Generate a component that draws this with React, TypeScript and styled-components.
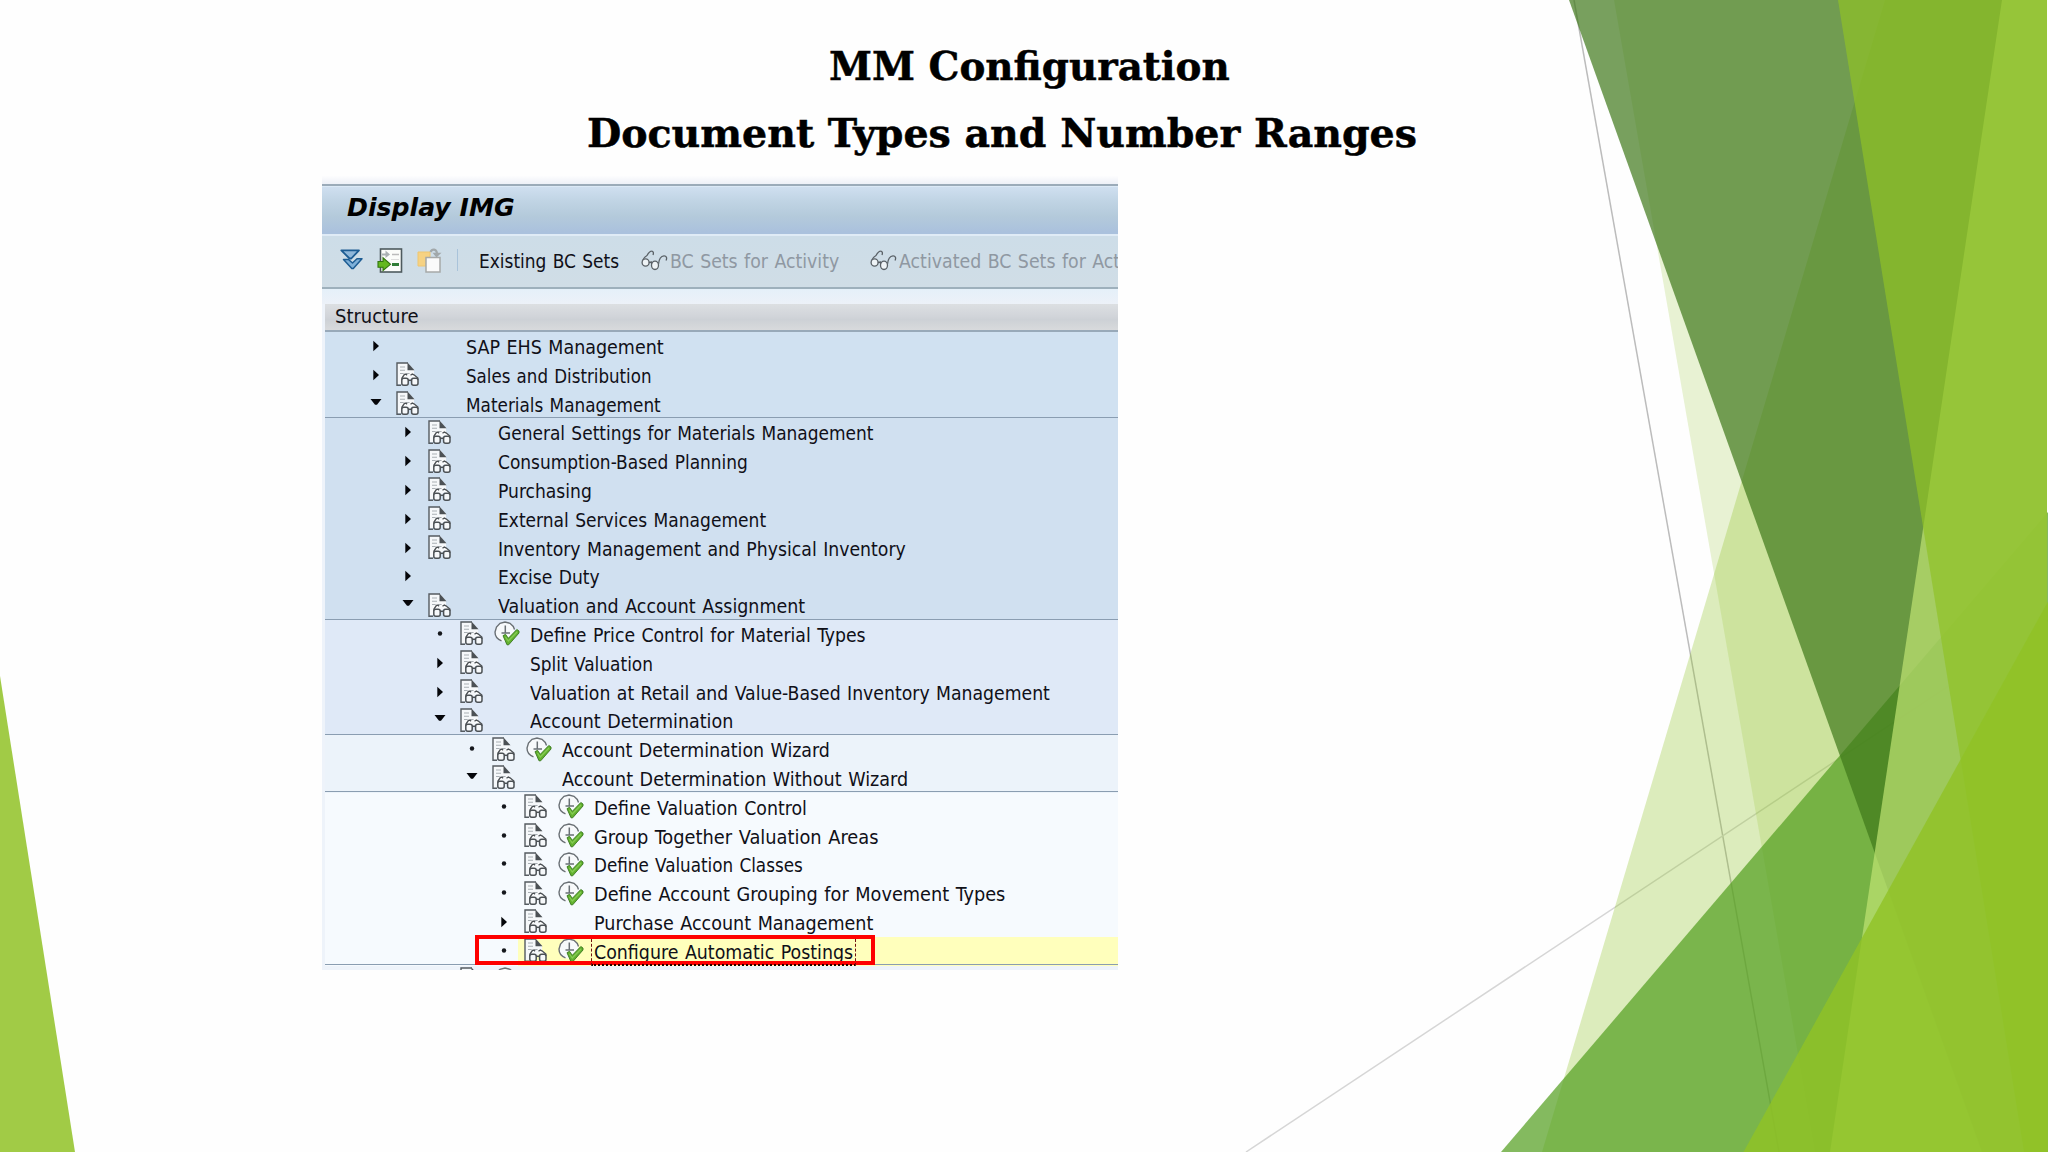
import React, { useLayoutEffect, useRef, useState } from 'react';
import styled, { createGlobalStyle } from 'styled-components';

const GlobalStyle = createGlobalStyle`
  html, body { margin: 0; padding: 0; background: #fff; }
  * { box-sizing: border-box; }
`;

const Slide = styled.main`
  position: relative;
  width: 2048px;
  height: 1152px;
  overflow: hidden;
  background: #fefefe;
`;

const Backdrop = styled.svg`
  position: absolute;
  inset: 0;
`;

const Content = styled.div`
  position: relative;
  display: flex;
  flex-direction: column;
  padding-top: 32px;
`;

const Headings = styled.header`
  height: 144px;
  font-family: 'DejaVu Serif', serif;
  font-weight: 700;
  font-size: 40px;
  line-height: 67px;
  color: #000;
  -webkit-text-stroke: 0.5px #000;
`;

const Heading = styled.h1<{ $indent: number }>`
  margin: 0;
  padding-left: ${(p) => p.$indent}px;
  font: inherit;
  height: 67px;
`;

const FitOuter = styled.span<{ $width: number }>`
  display: inline-block;
  width: ${(p) => p.$width}px;
  flex: none;
  white-space: nowrap;
`;

const FitInner = styled.span`
  display: inline-block;
  transform-origin: 0 50%;
  white-space: nowrap;
`;

/* Sets a run of text to an exact measure by condensing or expanding it. */
function Fit({ width, children }: { width: number; children: string }) {
  const ref = useRef<HTMLSpanElement>(null);
  const [scale, setScale] = useState(1);
  useLayoutEffect(() => {
    if (ref.current) setScale(width / ref.current.offsetWidth);
  }, [width, children]);
  return (
    <FitOuter $width={width}>
      <FitInner ref={ref} style={{ transform: `scaleX(${scale})` }}>
        {children}
      </FitInner>
    </FitOuter>
  );
}

const Window = styled.section`
  width: 796px;
  height: 794px;
  margin-left: 322px;
  overflow: hidden;
  display: flex;
  flex-direction: column;
  background: #eef3fa;
  font-family: 'DejaVu Sans Condensed', 'DejaVu Sans', sans-serif;
  font-stretch: condensed;
  font-size: 20.2px;
  word-spacing: 1px;
  color: #101018;
`;

const TopStrip = styled.div`
  height: 10px;
  flex: none;
  background: linear-gradient(#fdfdfe, #edf0f7);
  border-bottom: 2px solid #9babb9;
`;

const TitleBar = styled.div`
  height: 50px;
  flex: none;
  display: flex;
  align-items: center;
  padding: 0 0 7px 25px;
  background: linear-gradient(#cfdff0 0%, #c0d4e4 30%, #b4cadb 62%, #aac1dd 96%);
  border-top: 1px solid #dbe9f6;
  border-bottom: 2px solid #dfebf6;
  font-size: 25px;
  font-weight: 700;
  font-style: italic;
  word-spacing: 0;
  color: #000;
`;

const Toolbar = styled.div`
  height: 53px;
  flex: none;
  display: flex;
  align-items: center;
  padding: 0 0 3px 18px;
  background: linear-gradient(#cddde8, #d0dde6);
  border-bottom: 2px solid #9eb0bc;
`;

const Tool = styled.span<{ $gap: number }>`
  display: flex;
  flex: none;
  margin-right: ${(p) => p.$gap}px;
`;

const Divider = styled.i`
  width: 1px;
  height: 22px;
  flex: none;
  margin-right: 21px;
  background: #a9c3da;
`;

const ToolLabel = styled.span<{ $muted?: boolean; $gap?: number }>`
  flex: none;
  margin-right: ${(p) => p.$gap ?? 0}px;
  padding-top: 1px;
  color: ${(p) => (p.$muted ? '#8f98a2' : '#101018')};
`;

const Spacer = styled.div`
  height: 15px;
  flex: none;
  background: linear-gradient(#e5f0f9, #ecf1f8);
`;

const ColumnHead = styled.div`
  height: 28px;
  flex: none;
  display: flex;
  align-items: center;
  margin-left: 3px;
  padding: 0 0 2px 10px;
  background: linear-gradient(#dcdfe2, #d2d5da 45%, #cdd1d6 60%, #d8dadc);
  border-bottom: 2px solid #98a9b9;
`;

const Tree = styled.div`
  margin-left: 3px;
  flex: none;
`;

const Band = styled.div<{ $tone: string }>`
  position: relative;
  background: ${(p) => p.$tone};
  &::after {
    content: '';
    position: absolute;
    left: 0;
    right: 0;
    bottom: 0.4px;
    height: 1px;
    z-index: 1;
    background: #8a9db1;
  }
`;

const Row = styled.div<{ $level: number; $picked?: boolean }>`
  position: relative;
  height: 28.8px;
  display: grid;
  grid-template-columns: 26px 34px 36px 1fr;
  align-items: start;
  padding-left: ${(p) => 45 + p.$level * 32}px;
  background: ${(p) =>
    p.$picked ? 'linear-gradient(90deg, transparent 193px, #ffffbc 193px)' : 'none'};
`;

const Cell = styled.span<{ $top: number }>`
  display: flex;
  padding-top: ${(p) => p.$top}px;
`;

const IconCell = styled(Cell)`
  margin-left: -0.5px;
`;

const Label = styled.span`
  line-height: 31px;
`;

const Callout = styled.div`
  position: absolute;
  left: 149.500px;
  top: -2px;
  width: 400px;
  height: 30px;
  border: 4px solid #fe0000;
  z-index: 2;
`;

const Focus = styled.div`
  position: absolute;
  left: 266px;
  top: 2px;
  width: 265px;
  height: 27px;
  border: 1px dashed #701010;
  border-top: 0;
  border-bottom: 2px dotted #200;
  z-index: 3;
`;

const DocIcon = () => (
  <svg width="23" height="24" viewBox="0 0 23 24" fill="none">
    <path d="M1 1H12L18 8V14L8 22H1Z" fill="#f6f8fa" />
    <path d="M5 23.2H1V1H12" stroke="#555b60" strokeWidth="1.4" />
    <path d="M11.5 0.5L18.5 8.2H11.5Z" fill="#4c5155" />
    <path d="M4 5H9M4 8.3H9M4 11.5H14" stroke="#a9afb4" strokeWidth="1.1" />
    <path d="M6 18C6 14 7.500 12.500 10.500 12.200M14 12.500C16 11.500 17.500 13 18 14.500L21.500 17.500" stroke="#fff" strokeWidth="3" />
    <path d="M6 18V16L8.300 12.500L10 12L11 13.300M14.500 13.300L16.300 12L18 12.800L21.800 16V18" stroke="#4c5155" strokeWidth="1.400" />
    <rect x="5.800" y="16.300" width="6.400" height="6.900" rx="2" fill="#f6f8fa" stroke="#4c5155" strokeWidth="1.500" />
    <rect x="15.600" y="16.300" width="6.400" height="6.900" rx="2" fill="#f6f8fa" stroke="#4c5155" strokeWidth="1.500" />
    <path d="M12 18.300H15.600" stroke="#4c5155" strokeWidth="1.500" />
  </svg>
);

const ClockIcon = () => (
  <svg width="26" height="25" viewBox="0 0 26 25" fill="none">
    <circle cx="11" cy="11" r="9.800" fill="#f7f9fb" />
    <path d="M7.500 19.800C4 18.500 1 15.300 1 11L2.500 6L6 2.300L11 1L16 2.300L19.300 5.500L20.500 8.500" stroke="#6a7075" strokeWidth="1.400" />
    <path d="M11.300 4.500V12H16M7.500 12H11" stroke="#6a7075" strokeWidth="1.500" />
    <path d="M9 14.700L11.500 13.300L14.300 17.300L22.800 8.500L25 10V12L14.700 23.800H13Z" fill="#63b22f" stroke="#38761d" strokeWidth="0.900" />
    <path d="M11.500 16L14.300 20L23 11" stroke="#86cc55" strokeWidth="1.200" />
  </svg>
);

type Kind = 'closed' | 'open' | 'leaf';

const Marker = ({ kind }: { kind: Kind }) => (
  <svg width="12" height="12" viewBox="0 0 12 12">
    {kind === 'closed' && <path d="M3.300 0.700L9 6L3.300 11.300Z" fill="#05060a" />}
    {kind === 'open' && <path d="M0.500 1H11.500L7 6.700H5Z" fill="#05060a" />}
    {kind === 'leaf' && <circle cx="6" cy="5.500" r="2.200" fill="#15171c" />}
  </svg>
);

const ExpandIcon = () => (
  <svg width="24" height="22" viewBox="0 0 24 22">
    <path d="M3.500 10.500H8.500L12.500 14L17 9.800H22L13.300 19.500H11.800Z" fill="#7fb0d8" stroke="#1d5c93" strokeWidth="1.500" strokeLinejoin="round" />
    <path d="M1.300 1.300H19L11.300 9.500H9.500Z" fill="#8fb7da" stroke="#1d5c93" strokeWidth="1.800" strokeLinejoin="round" />
  </svg>
);

const ImportIcon = () => (
  <svg width="26" height="25" viewBox="0 0 26 25">
    <rect x="3.500" y="1" width="21" height="23" fill="#fbfcfa" stroke="#4e5a5e" strokeWidth="1.600" />
    <path d="M5 5.500H8.500V2.500L13 6.500L8.500 10V7.500H5Z" fill="#aab0b3" />
    <path d="M15 6.500H22" stroke="#bbb" strokeWidth="1.500" />
    <path d="M15 16.500H22" stroke="#2f7d36" strokeWidth="3" />
    <path d="M14 11.500H22" stroke="#ddd" />
    <path d="M1 13.500H6V9.800L13.500 16.300L6 22.500V19.300H1Z" fill="#64b81f" stroke="#32750f" strokeWidth="1.100" />
  </svg>
);

const CopyIcon = () => (
  <svg width="25" height="25" viewBox="0 0 25 25">
    <path d="M1 4H13V10H9V18H1Z" fill="#f6d283" stroke="#efc670" />
    <rect x="9" y="9.500" width="14" height="14.500" fill="#fafafa" stroke="#a7a9a8" strokeWidth="1.500" />
    <path d="M13.500 4C15 0.500 19.500 0.500 20 5.500" fill="none" stroke="#a2a8aa" strokeWidth="2.200" />
    <path d="M15.500 4.800H24.500L19.500 9.500Z" fill="#a2a8aa" />
  </svg>
);

const GlassesIcon = () => (
  <svg width="27" height="21" viewBox="0 0 27 21" fill="none" stroke="#596066" strokeWidth="1.300">
    <path d="M1.300 11C2.500 8 4 6.500 6 5.500C7.500 3 9 1.200 10.500 1.200C12.300 1 12.800 3 12 5M17.500 14C18 9 20.500 6 23 5.800C25.500 5.700 26.300 8 25 10.500" />
    <ellipse cx="4.600" cy="12.500" rx="3.500" ry="3.700" fill="#eef3f6" />
    <ellipse cx="14" cy="15.300" rx="3.500" ry="4.200" fill="#eef3f6" />
    <path d="M7.800 12.500L10.500 12V14" />
  </svg>
);

type Item = { text: string; width: number; level: number; kind: Kind; doc?: boolean; clock?: boolean; picked?: boolean };

const item = (level: number, kind: Kind, text: string, width: number, flags = 'd'): Item => ({
  level, kind, text, width,
  doc: flags.includes('d'), clock: flags.includes('c'), picked: flags.includes('p'),
});

const bands: { tone: string; items: Item[] }[] = [
  { tone: '#d0e1f1', items: [
    item(0, 'closed', 'SAP EHS Management', 197.5, ''),
    item(0, 'closed', 'Sales and Distribution', 185.5),
    item(0, 'open', 'Materials Management', 195),
  ] },
  { tone: '#d0e0f0', items: [
    item(1, 'closed', 'General Settings for Materials Management', 375.5),
    item(1, 'closed', 'Consumption-Based Planning', 250),
    item(1, 'closed', 'Purchasing', 93.5),
    item(1, 'closed', 'External Services Management', 268),
    item(1, 'closed', 'Inventory Management and Physical Inventory', 407.5),
    item(1, 'closed', 'Excise Duty', 102, ''),
    item(1, 'open', 'Valuation and Account Assignment', 307),
  ] },
  { tone: '#dfe9f7', items: [
    item(2, 'leaf', 'Define Price Control for Material Types', 336, 'dc'),
    item(2, 'closed', 'Split Valuation', 123.5),
    item(2, 'closed', 'Valuation at Retail and Value-Based Inventory Management', 519.5),
    item(2, 'open', 'Account Determination', 203.5),
  ] },
  { tone: '#ecf3fa', items: [
    item(3, 'leaf', 'Account Determination Wizard', 267.5, 'dc'),
    item(3, 'open', 'Account Determination Without Wizard', 346),
  ] },
  { tone: '#f6fafe', items: [
    item(4, 'leaf', 'Define Valuation Control', 213, 'dc'),
    item(4, 'leaf', 'Group Together Valuation Areas', 284.5, 'dc'),
    item(4, 'leaf', 'Define Valuation Classes', 209, 'dc'),
    item(4, 'leaf', 'Define Account Grouping for Movement Types', 411.5, 'dc'),
    item(4, 'closed', 'Purchase Account Management', 279.5),
    item(4, 'leaf', 'Configure Automatic Postings', 259, 'dcp'),
  ] },
];

function TreeRow({ it }: { it: Item }) {
  return (
    <Row $level={it.level} $picked={it.picked}>
      <Cell $top={8}><Marker kind={it.kind} /></Cell>
      <IconCell $top={1.5}>{it.doc && <DocIcon />}</IconCell>
      <IconCell $top={1.5}>{it.clock && <ClockIcon />}</IconCell>
      <Label><Fit width={it.width}>{it.text}</Fit></Label>
      {it.picked && <Focus />}
      {it.picked && <Callout />}
    </Row>
  );
}

const Facets = () => (
  <Backdrop width="2048" height="1152" viewBox="0 0 2048 1152">
    <path d="M1574 0L1779 1152" stroke="#bcbcbc" strokeWidth="1.500" />
    <path d="M1246 1152L2048 620" stroke="#d6d6d6" strokeWidth="1.500" />
    <path d="M1885 0H2047V1152H1542Z" fill="#90c226" fillOpacity="0.3" />
    <path d="M1614 0H2047V1152H1815Z" fill="#90c226" fillOpacity="0.2" />
    <path d="M1501 1152L2048 512V1152Z" fill="#54a021" fillOpacity="0.72" />
    <path d="M1569 0H2047V1152H1982Z" fill="#3f7819" fillOpacity="0.7" />
    <path d="M2002 0H2047V1152H1830Z" fill="#c0e474" fillOpacity="0.7" />
    <path d="M1838 0H2047V1152H2024Z" fill="#90c226" fillOpacity="0.7" />
    <path d="M1743.500 1152L2048 601.500V1152Z" fill="#90c226" fillOpacity="0.82" />
    <path d="M0 676L75 1152H0Z" fill="#90c226" fillOpacity="0.85" />
  </Backdrop>
);

export default function App() {
  return (
    <>
      <GlobalStyle />
      <Slide>
        <Facets />
        <Content>
          <Headings>
            <Heading $indent={829}><Fit width={401}>MM Configuration</Fit></Heading>
            <Heading $indent={587}><Fit width={830}>Document Types and Number Ranges</Fit></Heading>
          </Headings>
          <Window>
            <TopStrip />
            <TitleBar><Fit width={168}>Display IMG</Fit></TitleBar>
            <Toolbar>
              <Tool $gap={13}><ExpandIcon /></Tool>
              <Tool $gap={14}><ImportIcon /></Tool>
              <Tool $gap={15}><CopyIcon /></Tool>
              <Divider />
              <ToolLabel $gap={21}><Fit width={140.5}>Existing BC Sets</Fit></ToolLabel>
              <Tool $gap={2}><GlassesIcon /></Tool>
              <ToolLabel $muted $gap={31}><Fit width={169}>BC Sets for Activity</Fit></ToolLabel>
              <Tool $gap={2.5}><GlassesIcon /></Tool>
              <ToolLabel $muted><Fit width={221}>Activated BC Sets for Act</Fit></ToolLabel>
            </Toolbar>
            <Spacer />
            <ColumnHead><Fit width={83}>Structure</Fit></ColumnHead>
            <Tree>
              {bands.map((band) => (
                <Band key={band.tone} $tone={band.tone}>
                  {band.items.map((it) => <TreeRow key={it.text} it={it} />)}
                </Band>
              ))}
              <Row $level={2}>
                <Cell $top={8} />
                <IconCell $top={1.5}><DocIcon /></IconCell>
                <IconCell $top={1.5}><ClockIcon /></IconCell>
              </Row>
            </Tree>
          </Window>
        </Content>
      </Slide>
    </>
  );
}
